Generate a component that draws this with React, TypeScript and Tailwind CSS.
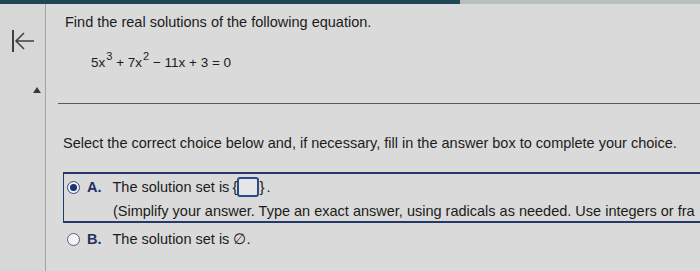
export default function App() {
  return (
    <div
      className="w-[700px] h-[271px] overflow-hidden bg-[#d9dad9] text-[#1c1c1c] relative"
      style={{ fontFamily: '"Liberation Sans", Arial, sans-serif' }}
    >
      <div className="flex h-[4px]">
        <div className="w-[460px] bg-[#1d4853]" />
        <div className="flex-1 bg-[#b9bfc0]" />
      </div>

      <div className="flex h-[267px]">
        <div className="w-[46px] shrink-0 border-r border-[#a3a5a4] bg-[#d6d7d6] flex flex-col items-center">
          <div className="mt-[26px] ml-[2px] flex items-center">
            <div className="w-[2px] h-[22px] bg-[#3f3f3f]" />
            <svg width="22" height="22" viewBox="0 0 22 22" className="-ml-[1px]">
              <path d="M21 11H3M11 3L3 11L11 19" fill="none" stroke="#3f3f3f" strokeWidth="1.5" />
            </svg>
          </div>
          <div className="mt-[35px] ml-[28px] w-0 h-0 border-l-[4px] border-r-[4px] border-b-[6px] border-l-transparent border-r-transparent border-b-[#3a3a3a]" />
        </div>

        <div className="flex-1 min-w-0">
          <div className="pl-[19px] pt-[8px] text-[14.5px] leading-[20px]">
            Find the real solutions of the following equation.
          </div>
          <div className="pl-[45px] pt-[22px] text-[13.5px] leading-[18px] whitespace-nowrap">
            5x<span className="text-[11px] relative -top-[7px] ml-[1px]">3</span> + 7x
            <span className="text-[11px] relative -top-[7px] ml-[1px]">2</span> − 11x + 3 = 0
          </div>
          <div className="ml-[12px] mt-[31px] h-px bg-[#5a5a5a]" />

          <div className="pl-[17px] pt-[29px] text-[14.5px] leading-[20px] whitespace-nowrap">
            Select the correct choice below and, if necessary, fill in the answer box to complete your choice.
          </div>

          <div className="ml-[17px] mt-[19px] border-t-2 border-b-2 border-l border-[#24386a] h-[51px] pt-[3px] text-[14.5px] leading-[20px] whitespace-nowrap overflow-hidden">
            <div className="flex items-center">
              <div className="ml-[3px] w-[13px] h-[13px] rounded-full border border-[#34457a] bg-[#eef0f4] flex items-center justify-center">
                <div className="w-[7px] h-[7px] rounded-full bg-[#1c2f78]" />
              </div>
              <span className="ml-[7px] font-bold text-[#243060]">A.</span>
              <span className="ml-[11px]">The solution set is</span>
              <span className="ml-[3px] flex items-center">
                <span className="text-[15px]">{'{'}</span>
                <span className="w-[22px] h-[20px] border-2 border-[#2b4a8a] rounded-[3px] bg-[#e4e6e8]" />
                <span className="text-[15px]">{'}'}</span>
                <span className="ml-[2px]">.</span>
              </span>
            </div>
            <div className="pl-[49px] mt-[4px]">
              (Simplify your answer. Type an exact answer, using radicals as needed. Use integers or fra
            </div>
          </div>

          <div className="ml-[17px] mt-[6px] flex items-center text-[14.5px] leading-[20px] whitespace-nowrap">
            <div className="ml-[4px] w-[13px] h-[13px] rounded-full border border-[#5a6478] bg-[#f2f3f5]" />
            <span className="ml-[7px] font-bold text-[#243060]">B.</span>
            <span className="ml-[11px]">The solution set is ∅.</span>
          </div>
        </div>
      </div>
    </div>
  );
}
